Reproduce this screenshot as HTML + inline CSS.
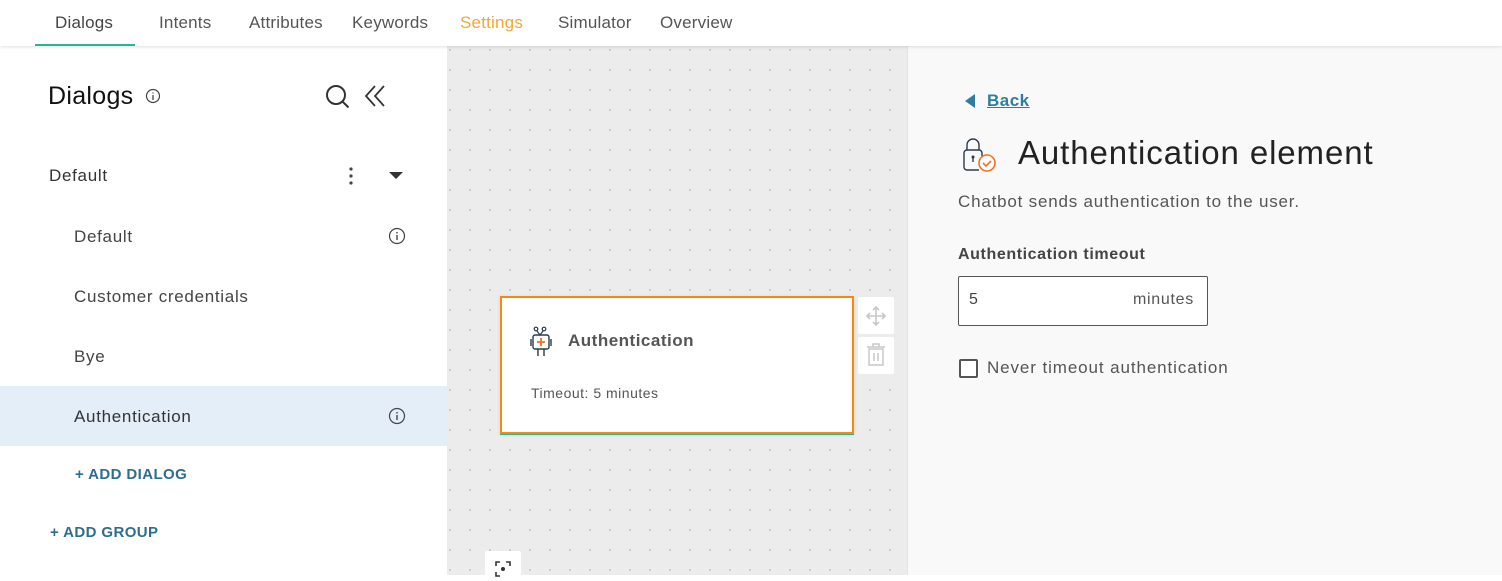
<!DOCTYPE html>
<html><head><meta charset="utf-8"><style>
*{box-sizing:border-box;margin:0;padding:0}
body{width:1502px;height:575px;overflow:hidden;font-family:"Liberation Sans",sans-serif;background:#fff;position:relative;color:#333;letter-spacing:0.7px}
.nav{position:absolute;left:0;top:0;width:1502px;height:46px;background:#fff;box-shadow:0 1px 3px rgba(0,0,0,.12);z-index:5;letter-spacing:0.2px}
.nav span{position:absolute;top:13px;font-size:17px;color:#555}
.ul{position:absolute;left:35px;top:44px;width:100px;height:2px;background:#2bb39a}
.left{position:absolute;left:0;top:46px;width:447px;height:529px;background:#fff}
.canvas{position:absolute;left:447px;top:46px;width:460px;height:529px;background-color:#ececec;background-image:radial-gradient(circle at 3px 4px,#c4c4c4 0.8px,transparent 1.1px);background-size:20px 20px}
.right{position:absolute;left:907px;top:46px;width:595px;height:529px;background:#f9f9f9;border-left:1px solid #e4e4e4}
.t{position:absolute;white-space:nowrap}
</style></head><body>
<div class="nav">
<span style="left:55px;color:#444">Dialogs</span>
<span style="left:159px">Intents</span>
<span style="left:249px">Attributes</span>
<span style="left:352px">Keywords</span>
<span style="left:460px;color:#f5a534">Settings</span>
<span style="left:558px">Simulator</span>
<span style="left:660px">Overview</span>
<div class="ul"></div>
</div>
<div class="left">
<div class="t" style="left:48px;top:36px;font-size:25px;color:#111;letter-spacing:0.3px">Dialogs</div>
<svg style="position:absolute;left:145px;top:42px" width="16" height="16"><circle cx="8" cy="8" r="6.5" fill="none" stroke="#444" stroke-width="1.2"/><path d="M8 7v5M8 4.5v1" stroke="#444" stroke-width="1.3"/></svg>
<svg style="position:absolute;left:324px;top:37px" width="28" height="28"><circle cx="12" cy="12" r="9" fill="none" stroke="#333" stroke-width="2"/><path d="M18.5 18.5l6 6" stroke="#333" stroke-width="2"/></svg>
<svg style="position:absolute;left:362px;top:38px" width="28" height="24"><path d="M13 2L4 12l9 10M22 2l-9 10 9 10" fill="none" stroke="#333" stroke-width="1.8"/></svg>
<div class="t" style="left:49px;top:120px;font-size:17px;color:#333">Default</div>
<svg style="position:absolute;left:348px;top:166px;top:120px" width="6" height="20"><circle cx="3" cy="3" r="1.6" fill="#444"/><circle cx="3" cy="10" r="1.6" fill="#444"/><circle cx="3" cy="17" r="1.6" fill="#444"/></svg>
<svg style="position:absolute;left:389px;top:126px" width="14" height="8"><path d="M0 0h14L7 7z" fill="#333"/></svg>
<div class="t" style="left:74px;top:181px;font-size:17px;color:#444">Default</div>
<svg style="position:absolute;left:388px;top:181px" width="18" height="18"><circle cx="9" cy="9" r="7.5" fill="none" stroke="#444" stroke-width="1.2"/><path d="M9 8v5M9 5v1.5" stroke="#444" stroke-width="1.4"/></svg>
<div class="t" style="left:74px;top:241px;font-size:17px;color:#444">Customer credentials</div>
<div class="t" style="left:74px;top:301px;font-size:17px;color:#444">Bye</div>
<div style="position:absolute;left:0;top:340px;width:447px;height:60px;background:#e3eef8"></div>
<div class="t" style="left:74px;top:361px;font-size:17px;color:#333">Authentication</div>
<svg style="position:absolute;left:388px;top:361px" width="18" height="18"><circle cx="9" cy="9" r="7.5" fill="none" stroke="#444" stroke-width="1.2"/><path d="M9 8v5M9 5v1.5" stroke="#444" stroke-width="1.4"/></svg>
<div class="t" style="left:75px;top:420px;font-size:15px;font-weight:bold;color:#2d6e8e;letter-spacing:0.4px">+ ADD DIALOG</div>
<div class="t" style="left:50px;top:478px;font-size:15px;font-weight:bold;color:#2d6e8e;letter-spacing:0.4px">+ ADD GROUP</div>
</div>
<div class="canvas">
<div style="position:absolute;left:53px;top:250px;width:354px;height:138px;background:#fff;border:2px solid #f7890c;box-shadow:0 1px 0 #2bb39a,0 1px 4px rgba(0,0,0,.1)"></div>
<svg style="position:absolute;left:82px;top:280px" width="28" height="32"><circle cx="7" cy="3" r="1.8" fill="none" stroke="#2b3a4a" stroke-width="1.2"/><circle cx="15" cy="3" r="1.8" fill="none" stroke="#2b3a4a" stroke-width="1.2"/><path d="M8 5l3 4 3-4" fill="none" stroke="#2b3a4a" stroke-width="1.2"/><rect x="4" y="9" width="16" height="14" rx="2" fill="none" stroke="#2b3a4a" stroke-width="1.4"/><path d="M2 13v7M22 13v7M9 23v7M15 23v7" stroke="#2b3a4a" stroke-width="1.4"/><path d="M12 12v8M8 16h8" stroke="#f36f21" stroke-width="1.8"/></svg>
<div class="t" style="left:121px;top:285px;font-size:17px;font-weight:bold;color:#555;letter-spacing:0.5px">Authentication</div>
<div class="t" style="left:84px;top:339px;font-size:14px;color:#555;letter-spacing:0.5px">Timeout: 5 minutes</div>
<div style="position:absolute;left:411px;top:251px;width:36px;height:37px;background:#fff;border-radius:2px"></div>
<svg style="position:absolute;left:418px;top:259px" width="22" height="22"><path d="M11 2v18M2 11h18M8 5l3-3 3 3M8 17l3 3 3-3M5 8l-3 3 3 3M17 8l3 3-3 3" fill="none" stroke="#c8c8c8" stroke-width="1.6"/></svg>
<div style="position:absolute;left:411px;top:291px;width:36px;height:37px;background:#fff;border-radius:2px"></div>
<svg style="position:absolute;left:419px;top:297px" width="20" height="24"><path d="M1 4h18M7 4V1h6v3" fill="none" stroke="#c8c8c8" stroke-width="1.5"/><rect x="3" y="6" width="14" height="16" fill="none" stroke="#c8c8c8" stroke-width="1.5"/><path d="M8 10v8M12 10v8" stroke="#c8c8c8" stroke-width="1.5"/></svg>
<div style="position:absolute;left:38px;top:505px;width:36px;height:30px;background:#fff;border-radius:2px"></div>
<svg style="position:absolute;left:48px;top:515px" width="16" height="16"><path d="M1 5V1h4M11 1h4v4M1 11v4h4" fill="none" stroke="#333" stroke-width="1.6"/><circle cx="8" cy="8" r="2" fill="#333"/></svg>
</div>
<div class="right">
<svg style="position:absolute;left:57px;top:48px" width="10" height="14"><path d="M10 0v14L0 7z" fill="#2d7ea0"/></svg>
<div class="t" style="left:79px;top:45px;font-size:17px;font-weight:bold;color:#2d7ea0;text-decoration:underline;letter-spacing:0.5px">Back</div>
<svg style="position:absolute;left:53px;top:88px" width="40" height="40"><path d="M6 16v-5a6 6 0 0 1 12 0v5" fill="none" stroke="#2b3a4a" stroke-width="1.4"/><path d="M18 36H6a3 3 0 0 1-3-3V19a3 3 0 0 1 3-3h12a3 3 0 0 1 3 3v3" fill="none" stroke="#2b3a4a" stroke-width="1.4"/><circle cx="12" cy="23" r="1.5" fill="#2b3a4a"/><path d="M12 24v4" stroke="#2b3a4a" stroke-width="1.4"/><circle cx="26" cy="29" r="8" fill="#fff" stroke="#f36f21" stroke-width="1.6"/><path d="M22 29l3 3 5-5" fill="none" stroke="#f36f21" stroke-width="1.6"/></svg>
<div class="t" style="left:110px;top:88px;font-size:33px;color:#222;letter-spacing:0.9px">Authentication element</div>
<div class="t" style="left:50px;top:146px;font-size:17px;color:#555;letter-spacing:0.8px">Chatbot sends authentication to the user.</div>
<div class="t" style="left:50px;top:200px;font-size:16px;font-weight:bold;color:#444;letter-spacing:0.6px">Authentication timeout</div>
<div style="position:absolute;left:50px;top:230px;width:250px;height:50px;background:#fff;border:1px solid #555;border-radius:2px"></div>
<div class="t" style="left:61px;top:245px;font-size:16px;color:#444">5</div>
<div class="t" style="left:225px;top:245px;font-size:16px;color:#555">minutes</div>
<div style="position:absolute;left:51px;top:313px;width:19px;height:19px;border:2px solid #555;border-radius:2px;background:#fff"></div>
<div class="t" style="left:79px;top:312px;font-size:17px;color:#555;letter-spacing:0.9px">Never timeout authentication</div>
</div>
</body></html>
